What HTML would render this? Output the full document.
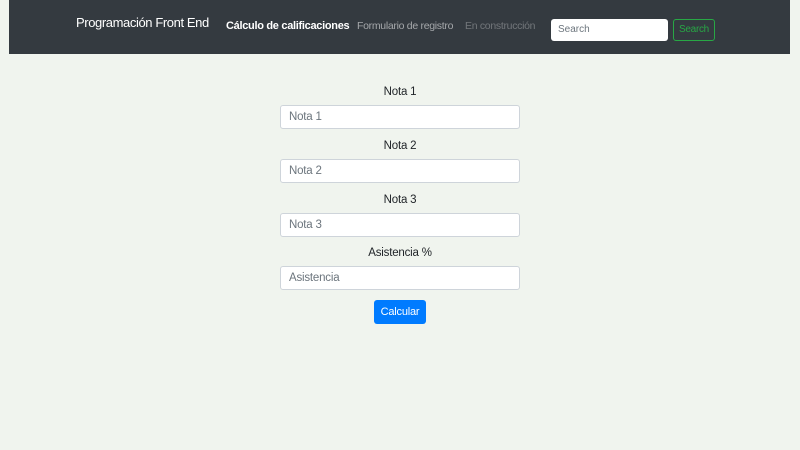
<!DOCTYPE html>
<html><head><meta charset="utf-8"><style>
body{margin:0;width:800px;height:450px;background:#f0f4ee;font-family:"Liberation Sans",sans-serif;position:relative;overflow:hidden}
.nav{position:absolute;left:9px;top:0;width:781px;height:54px;background:#343a40}
.t{position:absolute;white-space:nowrap}
.lbl{position:absolute;left:280px;width:240px;text-align:center;font-size:11.5px;color:#212529;letter-spacing:-0.2px}
.inp{position:absolute;left:280px;background:#fff;border:1px solid #ced4da;border-radius:3px;font-size:11.5px;color:#6c757d;line-height:23px;padding-left:8px;box-sizing:border-box;width:240px;height:24px;letter-spacing:-0.2px}
</style></head><body>
<div class="nav"></div>
<div class="t" style="left:76px;top:15px;font-size:13px;color:#fff;letter-spacing:-0.4px">Programación Front End</div>
<div class="t" style="left:226px;top:20px;font-size:11px;color:#fff;font-weight:bold;letter-spacing:-0.3px">Cálculo de calificaciones</div>
<div class="t" style="left:357px;top:20px;font-size:10.5px;color:rgba(255,255,255,.55);letter-spacing:-0.3px">Formulario de registro</div>
<div class="t" style="left:465px;top:20px;font-size:10.5px;color:rgba(255,255,255,.3);letter-spacing:-0.3px">En construcción</div>
<div class="t" style="left:551px;top:19px;width:117px;height:22px;background:#fff;border-radius:3px;font-size:10px;color:#6c757d;line-height:22px;padding-left:7px;box-sizing:border-box">Search</div>
<div class="t" style="left:673px;top:19px;width:42px;height:22px;border:1px solid #28a745;border-radius:3px;font-size:10px;color:#28a745;line-height:20px;text-align:center;box-sizing:border-box;letter-spacing:-0.3px">Search</div>
<div class="lbl" style="top:86px">Nota 1</div><div class="inp" style="top:105px">Nota 1</div>
<div class="lbl" style="top:140px">Nota 2</div><div class="inp" style="top:159px">Nota 2</div>
<div class="lbl" style="top:194px">Nota 3</div><div class="inp" style="top:213px">Nota 3</div>
<div class="lbl" style="top:247px">Asistencia %</div><div class="inp" style="top:266px">Asistencia</div>
<div class="t" style="left:374px;top:300px;width:52px;height:24px;background:#007bff;border-radius:3px;color:#fff;font-size:11px;line-height:24px;text-align:center;letter-spacing:-0.2px">Calcular</div>
</body></html>
